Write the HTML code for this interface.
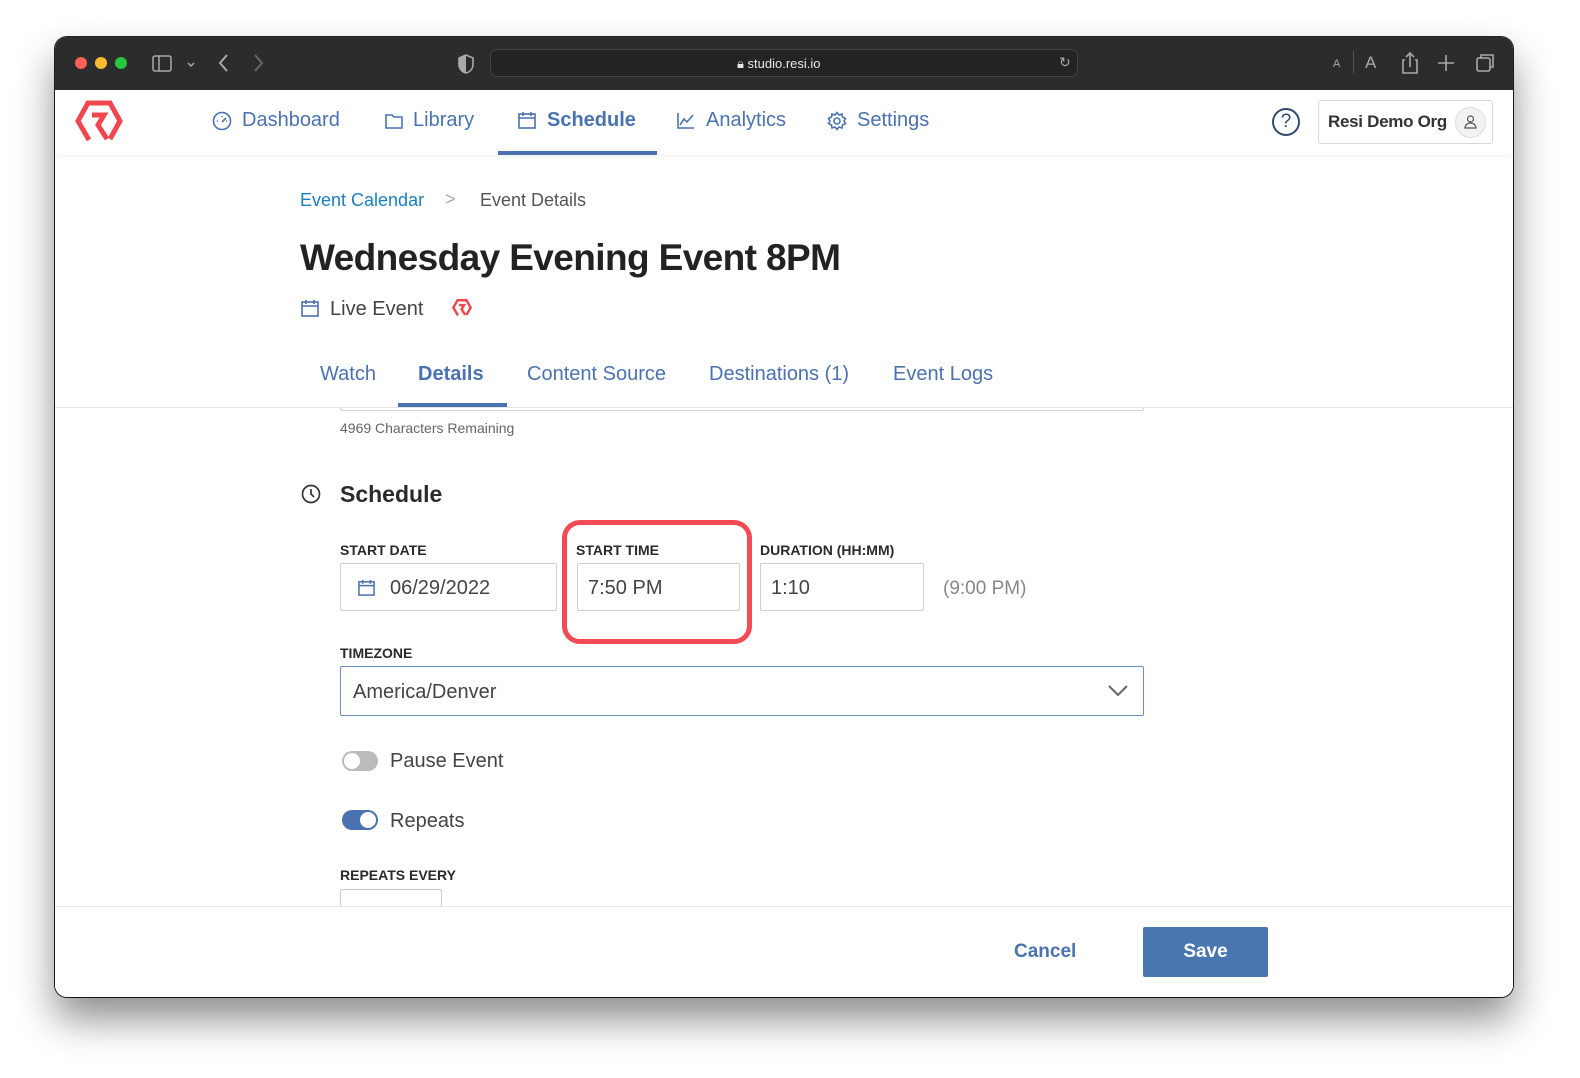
<!DOCTYPE html>
<html><head><meta charset="utf-8">
<style>
*{box-sizing:border-box;margin:0;padding:0}
body{width:1580px;height:1078px;background:#fff;font-family:"Liberation Sans",sans-serif;position:relative;overflow:hidden;color:#333}
.a{position:absolute;white-space:nowrap}
.win{position:absolute;left:55px;top:37px;width:1458px;height:960px;border-radius:12px;overflow:hidden;background:#fff;box-shadow:0 22px 40px rgba(0,0,0,.45),0 0 0 1px #222}
.tb{position:absolute;left:0;top:0;width:100%;height:53px;background:#2c2c2c}
.nav{color:#4a72b0;font-size:20px}
.lbl{font-size:14px;font-weight:bold;color:#2a2a2a}
.inp{position:absolute;border:1px solid #cfcfcf;border-radius:2px;background:#fff;height:48px}
</style></head><body>
<div class="win">
 <div class="tb">
  <div class="a" style="left:20px;top:20px;width:12px;height:12px;border-radius:50%;background:#fe5f57"></div>
  <div class="a" style="left:40px;top:20px;width:12px;height:12px;border-radius:50%;background:#febc2e"></div>
  <div class="a" style="left:60px;top:20px;width:12px;height:12px;border-radius:50%;background:#28c840"></div>
  <svg class="a" style="left:97px;top:17px" width="50" height="20" viewBox="0 0 50 20" fill="none" stroke="#aaa" stroke-width="1.5"><rect x="1" y="2" width="18" height="15" rx="2"/><line x1="7" y1="2" x2="7" y2="17"/><path d="M36 9l3 3 3-3"/></svg>
  <svg class="a" style="left:160px;top:16px" width="50" height="20" viewBox="0 0 50 20" fill="none" stroke-width="2"><path d="M12 2l-7 8 7 8" stroke="#aaa"/><path d="M40 2l7 8-7 8" stroke="#666"/></svg>
  <svg class="a" style="left:403px;top:17px" width="16" height="20" viewBox="0 0 16 20"><path d="M8 1L1 4v6c0 5 3 8 7 9 4-1 7-4 7-9V4z" fill="none" stroke="#aaa" stroke-width="1.6"/><path d="M8 1v18c-4-1-7-4-7-9V4z" fill="#aaa"/></svg>
  <div class="a" style="left:435px;top:12px;width:588px;height:28px;border-radius:7px;background:#232323;border:1px solid #444"></div>
  <div class="a" style="left:682px;top:19px;color:#e8e8e8;font-size:13px">🔒︎ studio.resi.io</div>
  <div class="a" style="left:1004px;top:17px;color:#aaa;font-size:14px">↻</div>
  <div class="a" style="left:1278px;top:21px;color:#aaa;font-size:11px">A</div>
  <div class="a" style="left:1298px;top:14px;width:1px;height:22px;background:#555"></div>
  <div class="a" style="left:1310px;top:16px;color:#aaa;font-size:17px">A</div>
  <svg class="a" style="left:1345px;top:14px" width="110" height="24" viewBox="0 0 110 24" fill="none" stroke="#aaa" stroke-width="1.6"><path d="M5 9H3v13h14V9h-2M10 16V2M6 6l4-4 4 4"/><path d="M46 4v16M38 12h16"/><rect x="77" y="7" width="13" height="13" rx="2"/><path d="M81 7V4h12v12h-3"/></svg>
 </div>
 <div class="a" style="left:0;top:53px;width:100%;height:65px;background:#fff;box-shadow:0 2px 4px rgba(0,0,0,.05)"></div>
 <svg class="a" style="left:20px;top:63px" width="48" height="44" viewBox="0 0 48 44" fill="none" stroke="#f0464e" stroke-width="5" stroke-linejoin="miter"><path d="M14 40L3 21 13 3h22l10 18-10 18"/><path d="M17 15h12l-6 10 9 14"/></svg>
 <svg class="a" style="left:157px;top:74px" width="20" height="20" viewBox="0 0 20 20" fill="none" stroke="#4a72b0" stroke-width="1.6"><circle cx="10" cy="10" r="8.5"/><path d="M10 11l4-4M5 10h1M14 10h1M10 5v1"/></svg>
 <div class="a nav" style="left:187px;top:72px">Dashboard</div>
 <svg class="a" style="left:330px;top:76px" width="18" height="16" viewBox="0 0 18 16" fill="none" stroke="#4a72b0" stroke-width="1.6"><path d="M1 2h6l2 2h8v11H1z"/></svg>
 <div class="a nav" style="left:358px;top:72px">Library</div>
 <svg class="a" style="left:463px;top:74px" width="18" height="18" viewBox="0 0 18 18" fill="none" stroke="#4a72b0" stroke-width="1.6"><rect x="1" y="3" width="16" height="14"/><path d="M1 7h16M5 1v4M13 1v4"/></svg>
 <div class="a nav" style="left:492px;top:72px;font-weight:bold">Schedule</div>
 <div class="a" style="left:443px;top:114px;width:159px;height:4px;background:#4a72b0"></div>
 <svg class="a" style="left:622px;top:75px" width="18" height="17" viewBox="0 0 18 17" fill="none" stroke="#4a72b0" stroke-width="1.6"><path d="M1 1v15h16M3 13l4-6 3 3 6-7"/></svg>
 <div class="a nav" style="left:651px;top:72px">Analytics</div>
 <svg class="a" style="left:772px;top:74px" width="20" height="20" viewBox="0 0 20 20" fill="none" stroke="#4a72b0" stroke-width="1.6"><circle cx="10" cy="10" r="3"/><path d="M10 1.5l2 2.5 3-1 .5 3 3 1.5-1.5 2.5 1.5 2.5-3 1.5-.5 3-3-1-2 2.5-2-2.5-3 1-.5-3-3-1.5 1.5-2.5L1.5 7.5l3-1.5.5-3 3 1z"/></svg>
 <div class="a nav" style="left:802px;top:72px">Settings</div>
 <div class="a" style="left:1217px;top:71px;width:28px;height:28px;border:2px solid #2f4a6e;border-radius:50%;text-align:center;font-size:19px;line-height:24px;color:#2f4a6e">?</div>
 <div class="a" style="left:1263px;top:63px;width:175px;height:44px;border:1px solid #d8d8d8;border-radius:3px"></div>
 <div class="a" style="left:1273px;top:75px;font-size:17px;font-weight:bold;color:#333;letter-spacing:-.3px">Resi Demo Org</div>
 <div class="a" style="left:1400px;top:70px;width:31px;height:31px;border:1px solid #ddd;border-radius:50%;background:#f2f2f2"></div>
 <svg class="a" style="left:1409px;top:78px" width="13" height="14" viewBox="0 0 13 14" fill="none" stroke="#555" stroke-width="1.2"><circle cx="6.5" cy="4" r="3"/><path d="M1 13c0-3 2.5-5 5.5-5s5.5 2 5.5 5z"/></svg>
 <div class="a" style="left:245px;top:153px;font-size:18px;color:#1a7fc1">Event Calendar</div>
 <div class="a" style="left:390px;top:152px;font-size:18px;color:#aaa">&gt;</div>
 <div class="a" style="left:425px;top:153px;font-size:18px;color:#555">Event Details</div>
 <div class="a" style="left:245px;top:200px;font-size:37px;font-weight:bold;color:#222;letter-spacing:-.6px">Wednesday Evening Event 8PM</div>
 <svg class="a" style="left:246px;top:262px" width="18" height="18" viewBox="0 0 18 18" fill="none" stroke="#4a72b0" stroke-width="1.6"><rect x="1" y="3" width="16" height="14"/><path d="M1 7h16M5 1v4M13 1v4"/></svg>
 <div class="a" style="left:275px;top:261px;font-size:20px;color:#444">Live Event</div>
 <svg class="a" style="left:397px;top:262px" width="20" height="18" viewBox="0 0 48 44" fill="none" stroke="#f0464e" stroke-width="6"><path d="M14 40L3 21 13 3h22l10 18-10 18"/><path d="M17 15h12l-6 10 9 14"/></svg>
 <div class="a nav" style="left:265px;top:326px">Watch</div>
 <div class="a nav" style="left:363px;top:326px;font-weight:bold">Details</div>
 <div class="a nav" style="left:472px;top:326px">Content Source</div>
 <div class="a nav" style="left:654px;top:326px">Destinations (1)</div>
 <div class="a nav" style="left:838px;top:326px">Event Logs</div>
 <div class="a" style="left:0;top:370px;width:100%;height:1px;background:#e4e4e4"></div>
 <div class="a" style="left:343px;top:366px;width:109px;height:4px;background:#4a72b0"></div>
 <div class="a" style="left:285px;top:371px;width:804px;height:3px;border:1px solid #d4d4d4;border-top:none;border-radius:0 0 2px 2px"></div>
 <div class="a" style="left:285px;top:383px;font-size:14px;color:#666">4969 Characters Remaining</div>
 <svg class="a" style="left:246px;top:447px" width="20" height="20" viewBox="0 0 20 20" fill="none" stroke="#333" stroke-width="1.7"><circle cx="10" cy="10" r="8.5"/><path d="M10 5v5l3 3"/></svg>
 <div class="a" style="left:285px;top:444px;font-size:23px;font-weight:bold;color:#2a2a2a">Schedule</div>
 <div class="a lbl" style="left:285px;top:505px">START DATE</div>
 <div class="inp" style="left:285px;top:526px;width:217px"></div>
 <svg class="a" style="left:303px;top:542px" width="17" height="17" viewBox="0 0 18 18" fill="none" stroke="#4a72b0" stroke-width="1.6"><rect x="1" y="3" width="16" height="14"/><path d="M1 7h16M5 1v4M13 1v4"/></svg>
 <div class="a" style="left:335px;top:540px;font-size:20px;color:#444">06/29/2022</div>
 <div class="a lbl" style="left:521px;top:505px">START TIME</div>
 <div class="inp" style="left:522px;top:526px;width:163px"></div>
 <div class="a" style="left:533px;top:540px;font-size:20px;color:#444">7:50 PM</div>
 <div class="a" style="left:507px;top:483px;width:190px;height:124px;border:5px solid #f24b55;border-radius:18px"></div>
 <div class="a lbl" style="left:705px;top:505px">DURATION (HH:MM)</div>
 <div class="inp" style="left:705px;top:526px;width:164px"></div>
 <div class="a" style="left:716px;top:540px;font-size:20px;color:#444">1:10</div>
 <div class="a" style="left:888px;top:541px;font-size:19px;color:#888">(9:00 PM)</div>
 <div class="a lbl" style="left:285px;top:608px">TIMEZONE</div>
 <div class="a" style="left:285px;top:629px;width:804px;height:50px;border:1px solid #6a8cc0;border-radius:2px"></div>
 <div class="a" style="left:298px;top:644px;font-size:20px;color:#444">America/Denver</div>
 <svg class="a" style="left:1053px;top:648px" width="20" height="12" viewBox="0 0 20 12" fill="none" stroke="#666" stroke-width="2"><path d="M1 1l9 9 9-9"/></svg>
 <div class="a" style="left:287px;top:714px;width:36px;height:20px;border-radius:10px;background:#bbb"></div>
 <div class="a" style="left:289px;top:716px;width:16px;height:16px;border-radius:50%;background:#fff"></div>
 <div class="a" style="left:335px;top:713px;font-size:20px;color:#444">Pause Event</div>
 <div class="a" style="left:287px;top:773px;width:36px;height:20px;border-radius:10px;background:#4a72b0"></div>
 <div class="a" style="left:305px;top:775px;width:16px;height:16px;border-radius:50%;background:#fff"></div>
 <div class="a" style="left:335px;top:773px;font-size:20px;color:#444">Repeats</div>
 <div class="a lbl" style="left:285px;top:830px">REPEATS EVERY</div>
 <div class="a" style="left:285px;top:852px;width:102px;height:20px;border:1px solid #ccc;border-bottom:none;border-radius:2px 2px 0 0"></div>
 <div class="a" style="left:0;top:869px;width:100%;height:91px;background:#fff;border-top:1px solid #e4e4e4"></div>
 <div class="a" style="left:959px;top:904px;font-size:19px;font-weight:bold;color:#4a72b0">Cancel</div>
 <div class="a" style="left:1088px;top:890px;width:125px;height:50px;background:#4a76b0;border-radius:2px;color:#fff;font-size:19px;font-weight:bold;text-align:center;line-height:50px">Save</div>
</div>
</body></html>
